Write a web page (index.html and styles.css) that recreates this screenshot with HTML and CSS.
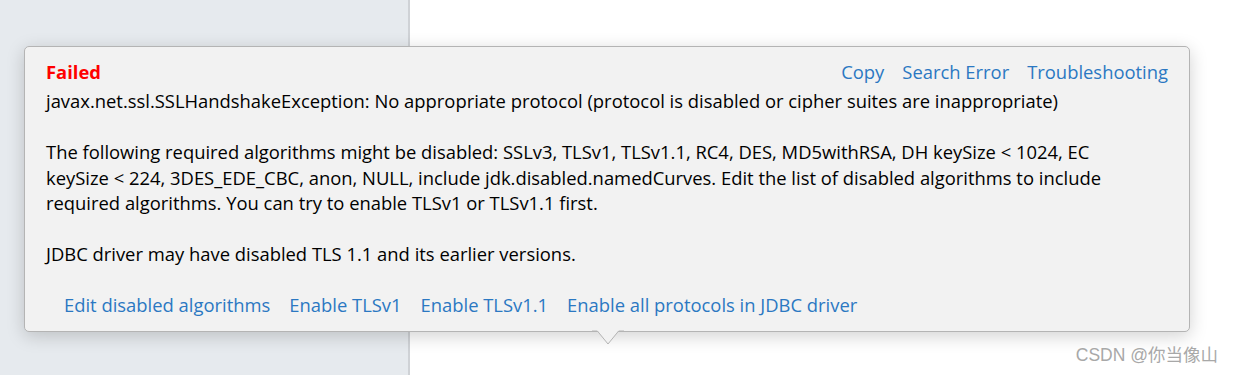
FILE: index.html
```html
<!DOCTYPE html>
<html>
<head>
<meta charset="utf-8">
<link rel="stylesheet" href="styles.css">
</head>
<body>
<div class="page">
  <div class="side"></div>
  <div class="main"></div>
</div>
<div class="popup">
  <div class="head">
    <span class="failed">Failed</span>
    <div class="actions">
      <a>Copy</a>
      <a>Search Error</a>
      <a>Troubleshooting</a>
    </div>
  </div>
  <div class="body">
    <p>javax.net.ssl.SSLHandshakeException: No appropriate protocol (protocol is disabled or cipher suites are inappropriate)</p>
    <p>The following required algorithms might be disabled: SSLv3, TLSv1, TLSv1.1, RC4, DES, MD5withRSA, DH keySize &lt; 1024, EC keySize &lt; 224, 3DES_EDE_CBC, anon, NULL, include jdk.disabled.namedCurves. Edit the list of disabled algorithms to include required algorithms. You can try to enable TLSv1 or TLSv1.1 first.</p>
    <p>JDBC driver may have disabled TLS 1.1 and its earlier versions.</p>
  </div>
  <div class="links">
    <a>Edit disabled algorithms</a>
    <a>Enable TLSv1</a>
    <a>Enable TLSv1.1</a>
    <a>Enable all protocols in JDBC driver</a>
  </div>
  <svg class="arrow" width="32" height="16" viewBox="0 0 32 16">
    <path d="M0 0.5 L5 0.5 L16 14 L27 0.5 L32 0.5" fill="#f2f2f2" stroke="#b4b4b4" stroke-width="1"/>
    <rect x="0" y="-2" width="32" height="2.5" fill="#f2f2f2"/>
  </svg>
</div>
<div class="watermark">CSDN @你当像山</div>
</body>
</html>
```
FILE: styles.css
```css
html, body {
  margin: 0;
  padding: 0;
  width: 1233px;
  height: 375px;
  overflow: hidden;
  background: #ffffff;
  font-family: "Open Sans", "Noto Sans", "Noto Sans CJK SC", sans-serif;
}
.page {
  display: flex;
  height: 375px;
}
.side {
  width: 408px;
  background: #e6eaee;
  border-right: 2px solid #cfd2d6;
}
.main {
  flex: 1;
  background: #ffffff;
}
.popup {
  position: absolute;
  left: 24px;
  top: 46px;
  width: 1166px;
  height: 286px;
  box-sizing: border-box;
  background: #f2f2f2;
  border: 1px solid #b4b4b4;
  border-radius: 5px;
  box-shadow: 0 4px 18px rgba(0, 0, 0, 0.18);
  padding: 12px 21px 0 21px;
  font-size: 18.4px;
  line-height: 25.5px;
  color: #000000;
}
.head {
  display: flex;
  justify-content: space-between;
  align-items: center;
}
.failed {
  color: #ff0000;
  font-weight: bold;
}
.actions {
  display: flex;
  gap: 18px;
}
a {
  color: #2b78c2;
  cursor: pointer;
}
.body {
  margin-top: 3.5px;
}
.body p {
  margin: 0 0 25.5px 0;
  max-width: 1090px;
}
.body p:first-child {
  max-width: none;
}
.links {
  display: flex;
  gap: 19px;
  padding-left: 18px;
}
.arrow {
  position: absolute;
  left: 567px;
  bottom: -15px;
  overflow: visible;
}
.watermark {
  position: absolute;
  right: 15px;
  bottom: 9px;
  font-family: "Liberation Sans", "Noto Sans CJK SC", sans-serif;
  font-size: 17.5px;
  color: #a8a8a8;
}
```
